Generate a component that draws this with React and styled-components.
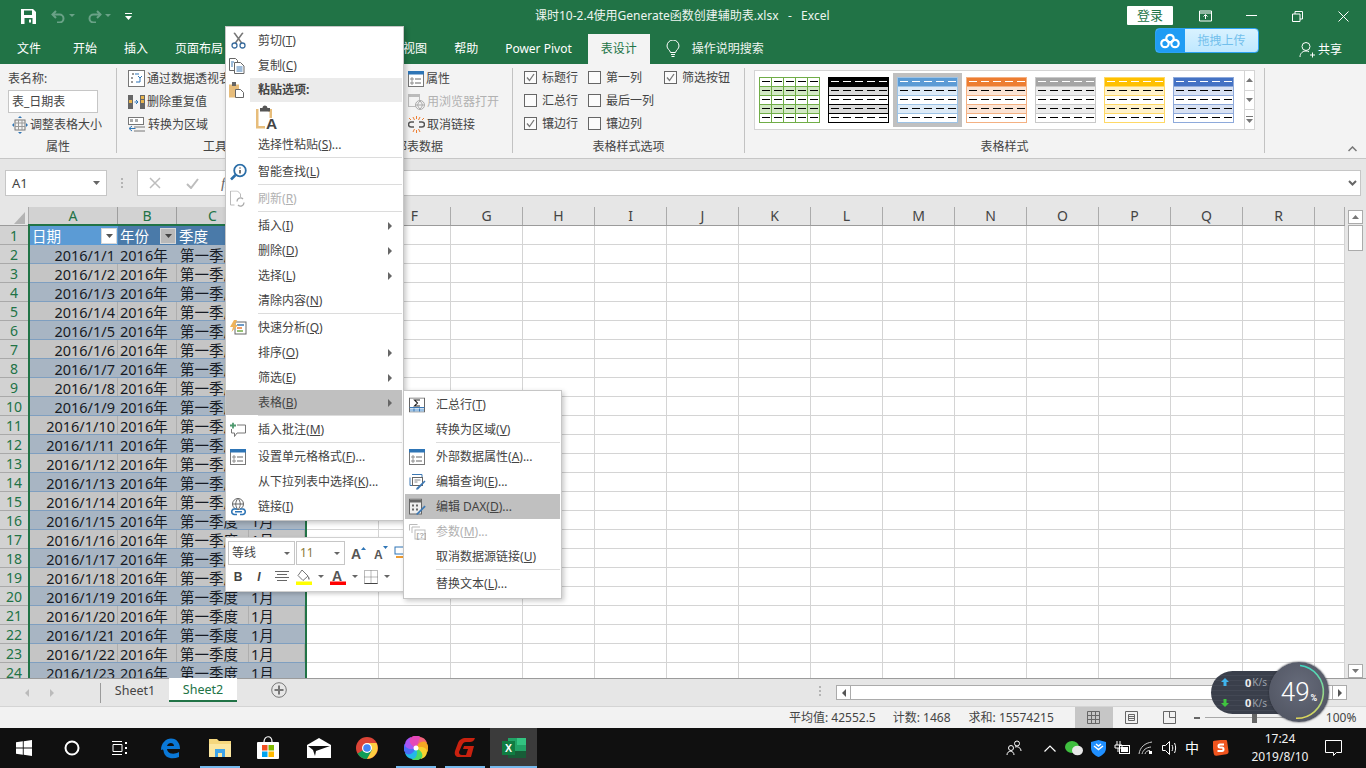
import React from 'react';
import styled, { createGlobalStyle } from 'styled-components';

const Global = createGlobalStyle`
  html, body { margin: 0; padding: 0; background: #e6e6e6; }
  * { box-sizing: border-box; }
  #root { width: 1366px; height: 768px; overflow: hidden; }
  u { text-underline-offset: 1px; }
`;
const GREEN = '#217346';
const FONT = `"Noto Sans", "Noto Sans CJK SC", sans-serif`;

const Page = styled.div`
  position: relative; width: 1366px; height: 768px; display: flex; flex-direction: column;
  overflow: hidden; font-family: ${FONT}; font-size: 12px; color: #444; line-height: 1;
`;

/* title bar */
const TitleBar = styled.div`height: 32px; background: ${GREEN}; display: flex; align-items: center; color: #fff;`;
const Qat = styled.div`width: 535px; display: flex; align-items: center; padding-left: 21px; flex: none;`;
const QatSlot = styled.span`display: inline-flex; align-items: center; margin-right: ${p => p.$mr || 0}px;`;
const DocTitle = styled.div`font-size: 12px; color: #eef5f0; white-space: pre;`;
const LoginBtn = styled.div`
  margin-left: auto; margin-right: 9px; width: 46px; height: 19px; margin-top: -1px; background: #fff; color: ${GREEN};
  display: flex; align-items: center; justify-content: center; font-size: 13px; border-radius: 1px;
`;
const WinBtn = styled.div`width: 46px; height: 32px; display: flex; align-items: center; justify-content: center;`;

/* tabs */
const TabBar = styled.div`height: 32px; background: ${GREEN}; display: flex; align-items: center; padding-left: 17px; gap: 27px; color: #fff;`;
const Tab = styled.div`white-space: nowrap; padding-top: 1px; margin-right: ${p => p.$mr || 0}px;`;
const ActiveTab = styled.div`
  margin-left: -11px; margin-right: -13px; width: 62px; height: 30px; margin-top: 2px; background: #f3f3f3; color: ${GREEN};
  display: flex; align-items: center; justify-content: center;
`;
const Tell = styled.div`display: flex; align-items: center; gap: 12px; margin-left: 2px; padding-top: 1px; color: #eef5f0;`;
const Share = styled.div`margin-left: auto; margin-right: 24px; display: flex; align-items: center; gap: 2px; padding-top: 3px;`;
const Upload = styled.div`
  position: absolute; left: 1155px; top: 28px; width: 104px; height: 25px; border-radius: 4px; overflow: hidden; display: flex;
  border: 1px solid #2ba1f2; background: linear-gradient(#d9f2ff, #bfe8ff); color: #72bfec; font-size: 12px;
`;
const UploadIcon = styled.div`width: 30px; background: #1f9cf4; display: flex; align-items: center; justify-content: center; margin: -1px 0 -1px -1px;`;
const UploadText = styled.div`flex: 1; display: flex; align-items: center; justify-content: center;`;

/* ribbon */
const Ribbon = styled.div`height: 95px; background: #f3f3f3; border-bottom: 1px solid #c6c6c6; display: flex;`;
const Group = styled.div`width: ${p => p.$w}px; flex: none; display: flex; flex-direction: column; padding-top: 3px;`;
const GroupBody = styled.div`flex: 1; padding-left: ${p => p.$pl || 0}px;`;
const CheckGrid = styled.div`flex: 1; padding-left: 11px; margin-top: -1px; display: grid; grid-template-columns: 64px 76px 80px; grid-auto-rows: 23px; align-content: start;`;
const GroupLabel = styled.div`height: 22px; display: flex; align-items: center; justify-content: center; white-space: nowrap;`;
const Divider = styled.div`width: 1px; flex: none; height: 85px; margin-top: 4px; background: #c2c2c2;`;
const RibbonRow = styled.div`height: 23px; display: flex; align-items: center; gap: 2px; white-space: nowrap; padding-left: ${p => p.$pl || 0}px; color: ${p => p.$off ? '#b1b1b1' : '#444'};`;
const NameLabel = styled.div`height: 23px; display: flex; align-items: center; padding-left: 8px;`;
const NameInput = styled.div`
  margin-left: 8px; width: 90px; height: 23px; background: #fff; border: 1px solid #c6c6c6; padding-left: 3px; display: flex; align-items: center;
`;
const Check = styled.span`
  width: 13px; height: 13px; border: 1px solid #666; background: #fbfbfb; display: inline-flex; flex: none; align-items: center; justify-content: center;
`;
const CheckItem = styled.div`height: 23px; display: flex; align-items: center; gap: 5px; white-space: nowrap;`;
const Gallery = styled.div`
  margin: 3px 0 0 9px; width: 501px; height: 60px; background: #fff; border: 1px solid #d4d4d4; display: flex;
`;
const ThumbWrap = styled.div`width: 69px; height: 54px; margin-top: 2px; padding: 4px; flex: none; background: ${p => p.$on ? '#c0c0c0' : 'transparent'};`;
const GalleryScroll = styled.div`margin: -1px -1px -1px 6px; width: 15px; border: 1px solid #d4d4d4; display: flex; flex-direction: column; background: #fff;`;
const GalleryBtn = styled.div`flex: 1; display: flex; align-items: center; justify-content: center; & + & { border-top: 1px solid #d4d4d4; }`;
const Collapse = styled.div`align-self: flex-end; margin: 0 9px 6px auto;`;

/* formula bar */
const FormulaBand = styled.div`height: 48px; background: #e6e6e6; display: flex; padding: 11px 5px; align-items: stretch;`;
const NameBox = styled.div`
  width: 102px; background: #fff; border: 1px solid #c6c6c6; display: flex; align-items: center; justify-content: space-between; padding: 0 6px;
  font-size: 13px; color: #444;
`;
const Dots = styled.div`width: 30px; display: flex; align-items: center; justify-content: center;`;
const FormulaInput = styled.div`flex: 1; background: #fff; border: 1px solid #c6c6c6; display: flex; align-items: center; padding: 0 3px 0 11px;`;
const FxBtn = styled.span`width: ${p => p.$w || 37}px; display: inline-flex; justify-content: flex-start;`;
const FxText = styled.span`font-family: "Liberation Serif", serif; font-style: italic; font-size: 15px; color: #666;`;
const FormulaExpand = styled.span`margin-left: auto;`;

/* grid */
const GridArea = styled.div`height: 471px; display: flex; background: #e6e6e6;`;
const Sheet = styled.div`width: 1345px; flex: none; display: flex; flex-direction: column; overflow: hidden;`;
const ColHeaders = styled.div`height: 19px; display: flex; flex: none; background: #e6e6e6; border-bottom: 1px solid #9b9b9b;`;
const Corner = styled.div`width: 29px; flex: none; display: flex; align-items: flex-end; justify-content: flex-end; padding: 0 3px 1px 0; border-right: 1px solid #ababab;`;
const ColHead = styled.div`
  width: ${p => p.$w}px; flex: none; display: flex; align-items: center; justify-content: center; font-size: 14px;
  border-right: 1px solid ${p => p.$sel ? '#9e9e9e' : '#ababab'};
  background: ${p => p.$sel ? '#d2d2d2' : 'transparent'}; color: ${p => p.$sel ? GREEN : '#444'};
`;
const GridBody = styled.div`flex: 1; display: flex; min-height: 0;`;
const RowHeads = styled.div`width: 28px; flex: none; display: flex; flex-direction: column;`;
const RowHead = styled.div`
  height: 19px; flex: none; background: #d2d2d2; color: ${GREEN}; font-size: 14px; display: flex; align-items: center; justify-content: center;
  border-bottom: 1px solid #a9a9a9; padding-top: 2px;
`;
const TableRegion = styled.div`
  width: 279px; flex: none; border-left: 2px solid ${GREEN}; border-right: 2px solid ${GREEN}; border-top: 2px solid ${GREEN}; margin-top: -2px;
  display: flex; flex-direction: column; background: #fff;
`;
const TableRow = styled.div`height: 19px; flex: none; display: flex; border-bottom: 1px solid #7f9fc0; background: ${p => p.$band ? '#a8b5c3' : '#c5c5c5'};`;
const HeadRow = styled.div`height: 19px; flex: none; display: flex; background: #4a7aa9;`;
const HeadCell = styled.div`
  width: ${p => p.$w}px; flex: none; display: flex; align-items: center; justify-content: space-between; padding: 1px 1px 0 2px; color: #fff; font-size: 14.5px;
  background: ${p => p.$on ? '#5b9bd5' : 'transparent'}; white-space: nowrap;
`;
const FilterBtn = styled.span`
  width: 16px; height: 16px; flex: none; display: flex; align-items: center; justify-content: center; background: ${p => p.$on ? '#fff' : '#b9b9b9'}; border: 1px solid #d8d8d8;
`;
const Cell = styled.div`
  width: ${p => p.$w}px; flex: none; display: flex; align-items: center; justify-content: ${p => p.$right ? 'flex-end' : 'flex-start'};
  padding: 2px 2px 0 ${p => p.$pl || 2}px; color: #171b24; font-size: 14.5px; white-space: nowrap;
  border-right: 1px solid ${p => p.$band ? 'transparent' : '#aeaeae'};
`;
const BlankRegion = styled.div`flex: 1; display: flex; flex-direction: column; background: #fff;`;
const BlankRow = styled.div`height: 19px; flex: none; display: flex;`;
const Blank = styled.div`width: ${p => p.$w}px; flex: none; border-right: 1px solid #d4d4d4; border-bottom: 1px solid #d4d4d4;`;
const VScroll = styled.div`flex: 1; display: flex; flex-direction: column; padding: 3px 3px 0 3px;`;
const ScrollBtn = styled.div`height: 14px; flex: none; background: #fff; border: 1px solid #ababab; display: flex; align-items: center; justify-content: center;`;
const VTrack = styled.div`flex: 1; display: flex; flex-direction: column; padding-top: 1px;`;
const VThumb = styled.div`height: 26px; background: #fff; border: 1px solid #ababab;`;

/* sheet bar */
const SheetBar = styled.div`height: 28px; background: #e6e6e6; border-top: 1px solid #9b9b9b; display: flex; align-items: flex-start;`;
const NavArrows = styled.div`width: 100px; height: 27px; display: flex; align-items: center; gap: 21px; padding-left: 25px;`;
const TabSep = styled.div`width: 1px; height: 20px; background: #9b9b9b; margin-top: 4px;`;
const SheetTab = styled.div`
  width: 68px; height: 24px; margin-top: -1px; padding-top: 2px; display: flex; align-items: center; justify-content: center;
  background: ${p => p.$on ? '#fff' : 'transparent'}; color: ${p => p.$on ? GREEN : '#444'};
  border-bottom: ${p => p.$on ? `2px solid ${GREEN}` : '0'}; font-size: 12.5px;
`;
const AddSheet = styled.div`margin: 3px 0 0 34px; display: flex;`;
const HScrollDots = styled.div`margin: 7px 0 0 525px; width: 16px; display: flex; justify-content: center;`;
const HScroll = styled.div`
  margin: 6px 0 0 8px; width: 511px; height: 15px; border: 1px solid #ababab; background: #fff; display: flex; justify-content: space-between;
`;
const HBtn = styled.div`width: 14px; display: flex; align-items: center; justify-content: center; border-${p => p.$side}: 1px solid #ababab;`;

/* status bar */
const StatusBar = styled.div`height: 22px; background: #f2f2f2; border-top: 1px solid #d4d4d4; display: flex; align-items: stretch; padding-left: 789px;`;
const Stat = styled.div`display: flex; align-items: center; white-space: nowrap; margin-right: ${p => p.$mr}px; font-size: 12px;`;
const ViewBtn = styled.div`width: 38px; display: flex; align-items: center; justify-content: center; background: ${p => p.$on ? '#c6c6c6' : 'transparent'};`;
const ZoomWrap = styled.div`width: 125px; display: flex; align-items: center; padding-left: 5px;`;
const ZoomMinus = styled.div`width: 6px; height: 2px; background: #666; flex: none;`;
const ZoomTrack = styled.div`flex: 1; height: 1px; margin-left: 5px; background: #a8a8a8; position: relative;`;
const ZoomThumb = styled.div`position: absolute; left: 47px; top: -6px; width: 5px; height: 12px; background: #666;`;
const ZoomPct = styled.div`display: flex; align-items: center; margin-left: 12px;`;

/* taskbar */
const Taskbar = styled.div`height: 40px; background: #101010; display: flex; align-items: stretch; color: #fff;`;
const TaskSlot = styled.div`
  width: ${p => p.$w || 48}px; flex: none; display: flex; align-items: center; justify-content: center;
  background: ${p => p.$active ? '#3b3b3b' : 'transparent'};
  border-bottom: 2px solid ${p => p.$open ? '#76b9ed' : 'transparent'}; border-top: 2px solid transparent;
  margin-left: ${p => p.$ml || 0}px;
`;
const Tray = styled.div`margin-left: auto; display: flex; align-items: stretch;`;
const TraySlot = styled.div`
  width: ${p => p.$w || 24}px; flex: none; display: flex; align-items: center; justify-content: center; font-size: 14px;
  margin-left: ${p => p.$ml || 0}px; margin-right: ${p => p.$mr || 0}px;
`;
const Clock = styled.div`width: 84px; flex: none; display: flex; flex-direction: column; align-items: center; justify-content: center; gap: 6px; font-size: 12px; color: #f2f2f2;`;

/* overlay: context menu */
const Menu = styled.div`
  position: absolute; left: ${p => p.$x}px; top: ${p => p.$y}px; width: ${p => p.$w}px; background: #fff; border: 1px solid #c6c6c6;
  padding: ${p => p.$pt}px 0 ${p => p.$pb}px 0; box-shadow: 2px 2px 5px rgba(0,0,0,.22); z-index: ${p => p.$z};
`;
const Item = styled.div`
  height: 25px; display: flex; align-items: center; position: relative; margin: 0 ${p => p.$mx}px 0 ${p => p.$ml ?? 0}px; white-space: nowrap;
  padding-left: ${p => p.$pad}px; color: ${p => p.$off ? '#b1b1b1' : '#444'};
  background: ${p => p.$hot ? '#c0c0c0' : 'transparent'};
`;
const ItemIcon = styled.span`position: absolute; left: ${p => p.$l}px; top: 50%; transform: translateY(-50%); display: flex;`;
const Arrow = styled.span`
  position: absolute; right: 10px; top: 50%; margin-top: -4px; border-left: 4px solid #666; border-top: 4px solid transparent; border-bottom: 4px solid transparent;
`;
const Sep = styled.div`height: 1px; margin: 0 1px 1px ${p => p.$ml}px; background: #dcdcdc;`;
const PasteHeader = styled.div`
  height: 24px; margin: 0 1px 0 24px; padding-left: 8px; background: #ebebeb; display: flex; align-items: center; font-weight: 700; color: #444; position: relative;
`;
const PasteRow = styled.div`height: 30px; padding-left: 30px; display: flex; align-items: center;`;
const Mini = styled.div`
  position: absolute; left: 225px; top: 537px; width: 190px; height: 55px; background: #fff; border: 1px solid #d0d0d0; box-shadow: 1px 2px 4px rgba(0,0,0,.2); z-index: 3;
  padding: 3px 2px; display: flex; flex-direction: column;
`;
const MiniRow = styled.div`height: 24px; display: flex; align-items: center;`;
const MiniSelect = styled.div`
  width: ${p => p.$w}px; height: 24px; border: 1px solid #c6c6c6; margin-right: 1px; display: flex; align-items: center; justify-content: space-between; padding: 0 4px 0 3px; font-size: 12px; color: ${p => p.$c || '#444'};
`;
const MiniBtn = styled.span`width: ${p => p.$w}px; flex: none; display: inline-flex; align-items: center; justify-content: center;`;
const BoldLetter = styled.span`font-family: "Liberation Sans", sans-serif; font-size: 12px; font-weight: 700; font-style: ${p => p.$i ? 'italic' : 'normal'}; color: #444;`;
const Caret = styled.span`width: 0; height: 0; border-left: 3px solid transparent; border-right: 3px solid transparent; border-top: 3px solid #666; flex: none;`;

/* overlay: net meter */
const Net = styled.div`
  position: absolute; left: 1211px; top: 671px; width: 100px; height: 43px; border-radius: 22px 0 0 22px; z-index: 4;
  background: repeating-linear-gradient(#3a3f4b 0 4px, #434854 4px 5px);
  display: flex; flex-direction: column; justify-content: space-around; padding: 1px 0 1px 10px; color: #eee; font-size: 11px; font-weight: 700;
`;
const NetRow = styled.div`display: flex; align-items: center;`;
const NetNum = styled.span`margin-left: 16px;`;
const NetUnit = styled.span`font-weight: 400; color: #9aa0aa; font-size: 10px; margin-left: 1px;`;
const Dial = styled.div`
  position: absolute; left: 1269px; top: 662px; width: 60px; height: 60px; border-radius: 50%; z-index: 5;
  background: radial-gradient(circle at 50% 40%, #666b7a, #4c505d); box-shadow: 0 0 2px #22252c;
  display: flex; align-items: baseline; justify-content: center; padding-top: 17px; color: #fff; font-family: Roboto, sans-serif; font-size: 26px; font-weight: 300;
`;
const DialPct = styled.span`font-size: 9px; font-weight: 700; margin-left: 1px;`;
const DialArc = styled.svg`position: absolute; left: 0; top: 0;`;

/* ---------- drawings ---------- */
const S = ({ w = 16, h = 16, vb, children }) => (
  <svg width={w} height={h} viewBox={vb || `0 0 ${w} ${h}`} fill="none" style={{ display: 'block', flex: 'none' }}>{children}</svg>
);
const Save = () => <S w={15} h={15}><path d="M0 0h12l3 3v12H0z" fill="#fff" /><rect x="3" y="1.500" width="8" height="4.500" fill={GREEN} /><rect x="3.500" y="9" width="8" height="6" fill={GREEN} /><rect x="8" y="10.500" width="2" height="3" fill="#fff" /></S>;
const Undo = ({ flip }) => <S w={15} h={13}><g transform={flip ? 'translate(15,0) scale(-1,1)' : ''} stroke="#6aa287" strokeWidth="2"><path d="M5 1 1.500 4.500 5 8" /><path d="M2 4.500h6.500a4 4 0 0 1 0 8H6" /></g></S>;
const Dn = ({ c = '#6aa287' }) => <S w={6} h={4}><path d="M0 0h6L3 3z" fill={c} /></S>;
const Custom = () => <S w={7} h={7}><path d="M0 0h7v1H0zM0 3h7L3.500 7z" fill="#fff" /></S>;
const RibbonDisp = () => <S w={13} h={12}><path d="M.5 1h12v10H.5zM.5 3h12" stroke="#fff" /><path d="M6.500 9V5M4.500 6.500l2-2 2 2" stroke="#fff" /></S>;
const Minus = () => <S w={11} h={2}><rect width="11" height="1" fill="#fff" /></S>;
const Restore = () => <S w={11} h={11}><path d="M.5 3h7.500v7.500H.5zM3 3V.5h7.500V8H8" stroke="#fff" /></S>;
const Close = () => <S w={11} h={11}><path d="m.5.5 10 10M10.500.5l-10 10" stroke="#fff" /></S>;
const Bulb = () => <S w={14} h={18}><path d="M4.500 12.500C4 10 1 9 1 6a6 6 0 0 1 12 0c0 3-3 4-3.500 6.500z" stroke="#fff" /><path d="M5 14.500h4M5.500 16.500h3" stroke="#fff" /></S>;
const Person = () => <S w={17} h={17}><circle cx="7" cy="5.500" r="4" stroke="#fff" /><path d="M1 16c0-4 3-6 6-6 1 0 2 .2 3 .8M11 14h5M13.500 11.500v5" stroke="#fff" /></S>;
const Cloud = () => <S w={20} h={16}><circle cx="10" cy="5.500" r="3.700" stroke="#fff" strokeWidth="2.200" /><circle cx="5" cy="10.500" r="3.700" stroke="#fff" strokeWidth="2.200" /><circle cx="15" cy="10.500" r="3.700" stroke="#fff" strokeWidth="2.200" /></S>;

const Pivot = () => <S w={17} h={17}><rect x=".5" y=".5" width="16" height="16" stroke="#777" fill="#fff" /><path d="M4 3h2v2H4zM3 7h2v2H3zM3 11h2v2H3z" fill="#999" /><path d="M8 12h4V8M10 6l2 2 2-2M7 4h4" stroke="#2e75b6" /></S>;
const Dedupe = () => <S w={17} h={16}><path d="M0 1h5v14H0zM12 1h5v14h-5z" fill="#666" /><path d="M1 6h3v3H1zM13 6h3v3h-3zM13 2h3v3h-3z" fill="#e9b44c" /><path d="M6.500 8h3M8 6l2 2-2 2" stroke="#2e75b6" /></S>;
const Convert = () => <S w={18} h={16}><rect x=".5" y=".5" width="15" height="7" stroke="#777" fill="#fff" /><path d="M2 2h3v3H2zM7 2h3v3H7z" fill="#aaa" /><path d="M6 10h11M6 14h11" stroke="#777" /><path d="M4 9 1 11.500 4 14" stroke="#2e75b6" /><path d="M1.500 11.500h6" stroke="#2e75b6" /></S>;
const Resize = () => <S w={16} h={18}><rect x="3" y="4" width="10" height="10" stroke="#777" /><path d="M3 7h10M3 10.500h10M6.500 4v10M10 4v10" stroke="#999" /><path d="m8 0-2 2h4zM8 18l-2-2h4zM0 9l2-2v4zM16 9l-2-2v4z" fill="#2e75b6" /></S>;
const Props = ({ off }) => <S w={16} h={16}><rect x=".5" y=".5" width="15" height="15" fill="#fff" stroke="#777" /><rect width="16" height="3.500" fill={off ? '#aaa' : '#2e75b6'} /><path d="M3 7h2v2H3zM3 11h2v2H3z" stroke="#777" strokeWidth=".8" /><path d="M7 8h6M7 12h6" stroke="#666" /></S>;
const Browser = () => <S w={17} h={16}><rect x=".5" y=".5" width="11" height="12" stroke="#bbb" /><rect width="12" height="3" fill="#bbb" /><circle cx="12" cy="11" r="4.500" fill="#f3f3f3" stroke="#aaa" /><path d="M8 11h8M12 7c-3 3-3 5 0 8M12 7c3 3 3 5 0 8" stroke="#aaa" /></S>;
const Unlink = () => <S w={17} h={17}><path d="M6 6H3a2.500 2.500 0 0 0 0 5h3M11 6h3a2.500 2.500 0 0 1 0 5h-3" stroke="#555" strokeWidth="1.500" /><path d="M5 1l1.500 3M12 1l-1.500 3M8.500 0v3M5 16l1.500-3M12 16l-1.500-3M8.500 17v-3M1 2l2 2M16 2l-2 2" stroke="#ed7d31" /></S>;
const Tick = () => <S w={11} h={11}><path d="m2 5.500 2.500 3L9 2" stroke="#777" strokeWidth="1.300" /></S>;

const THEMES = [
  ['#70ad47', '#fff', '#000', '#d3e8c5'],
  ['#000', '#000', '#fff', '#d9d9d9'],
  ['#9dc3e6', '#5b9bd5', '#fff', '#deebf7'],
  ['#f4b183', '#ed7d31', '#fff', '#fbe4d5'],
  ['#c9c9c9', '#a5a5a5', '#fff', '#ededed'],
  ['#ffd966', '#ffc000', '#fff', '#fff2cc'],
  ['#8eaadb', '#4472c4', '#fff', '#d9e2f3'],
];
const Thumb = ({ t, i }) => {
  const [line, head, headDash, band] = t;
  return (
    <S w={61} h={46}>
      {[0, 1, 2, 3, 4].map(r => (
        <g key={r}>
          <rect x=".5" y={.5 + r * 9} width="60" height="9" fill={r === 0 ? head : r % 2 ? band : '#fff'} stroke={line} />
          {[0, 1, 2, 3, 4].map(c => (
            <rect key={c} x={3 + c * 12} y={4 + r * 9} width="8" height="1" fill={r === 0 ? headDash : '#000'} />
          ))}
        </g>
      ))}
      {i === 0 && [12, 24, 36, 48].map(x => <path key={x} d={`M${x + .5} 0v46`} stroke={line} />)}
    </S>
  );
};

const Scissors = () => <S w={15} h={17}><path d="M3 0l8 11M12 0 4 11" stroke="#777" strokeWidth="1.500" /><circle cx="3.500" cy="13" r="2.500" stroke="#3c6e9f" strokeWidth="1.300" /><circle cx="11.500" cy="13" r="2.500" stroke="#3c6e9f" strokeWidth="1.300" /></S>;
const CopyI = () => <S w={16} h={16}><path d="M.5.500h6l2 2v10h-8z" stroke="#666" fill="#fff" /><path d="M5.500 4.500h6l3.500 3.500v7.500H5.500z" stroke="#666" fill="#fff" /><path d="M2 4h3M2 6h2M2 8h2M7.500 9h6M7.500 11h6M7.500 13h6" stroke="#3c78b4" /></S>;
const PasteI = () => <S w={15} h={16}><rect y="2.500" width="10" height="13" fill="#e7bd7b" /><rect x="3" y="0" width="4" height="4" fill="#666" /><path d="M6.500 7.500h5l3 3v5h-8z" fill="#fff" stroke="#666" /></S>;
const PasteA = () => <S w={22} h={24}><path d="M0 4h2.500v17H9v2.500H0zM12 4h4v9h-2.500V6.500H12z" fill="#e7bd7b" /><path d="M4 3h2.500a2.500 2.500 0 0 1 5 0H14v3.500H4z" fill="#555" /><text x="10" y="23.500" fontFamily="Liberation Sans, sans-serif" fontSize="15.500" fontWeight="700" fill="#444">A</text></S>;
const Lookup = () => <S w={17} h={17}><circle cx="10" cy="7" r="5.800" stroke="#2b6ea8" strokeWidth="1.800" /><path d="M5.500 11.500 1 16" stroke="#2b6ea8" strokeWidth="2.500" /><path d="M10 4v1M10 6.500V10" stroke="#444" strokeWidth="1.500" /></S>;
const RefreshI = () => <S w={16} h={17}><path d="M.5.500h7l3 3v3M.5.500v14h4" stroke="#bbb" /><path d="M7 11a3.500 3.500 0 0 1 6-2.500M14 12a3.500 3.500 0 0 1-6 2.500" stroke="#aaa" strokeWidth="1.300" /></S>;
const Bolt = () => <S w={17} h={16}><rect x="5" y="2" width="11" height="12" fill="#fff" stroke="#666" /><path d="M7 5h7" stroke="#3c78b4" strokeWidth="1.500" /><path d="M7 8h5" stroke="#ed7d31" strokeWidth="1.500" /><path d="M7 11h6" stroke="#70ad47" strokeWidth="1.500" /><path d="M4 0 0 7h3L1.500 12 8 5H5l2-5z" fill="#efb35a" /></S>;
const Comment = () => <S w={16} h={15}><path d="M7 2.500h8.500v8H7L4.500 14v-3.500H1.500V6.500" stroke="#777" /><path d="M0 3h6M3 0v6" stroke="#4f9a6f" strokeWidth="1.800" /></S>;
const LinkI = () => <S w={17} h={18}><circle cx="8" cy="6" r="5.500" stroke="#666" /><path d="M2.500 6h11M8 .5c-3 3-3 8 0 11M8 .5c3 3 3 8 0 11" stroke="#666" /><path d="M7 11H4a2.800 2.800 0 0 0 0 5.500h3M10 11h3a2.800 2.800 0 0 1 0 5.500h-3M5 13.700h7" stroke="#2e75b6" strokeWidth="1.500" /></S>;
const SumI = () => <S w={16} h={15}><rect x=".5" y=".5" width="15" height="14" fill="#fff" stroke="#666" /><rect x="1" y="11" width="14" height="3" fill="#9dc3e6" /><path d="M.5 10h15M5 11v3M10.500 11v3" stroke="#3c78b4" /><path d="M11 2.500H5.500l3 3-3 3H11" stroke="#222" strokeWidth="1.100" /></S>;
const QueryI = () => <S w={17} h={16}><path d="M3 .5h10v3M1 3.500v8h4" stroke="#3c78b4" /><rect x="3.500" y="3.500" width="10" height="8" fill="#fff" stroke="#666" /><path d="M5.500 6h6M5.500 8h3" stroke="#888" /><path d="m7.500 14 8-7.500 1 1-7.500 8H7z" fill="#3c78b4" /></S>;
const DaxI = () => <S w={17} h={17}><rect x=".5" y=".5" width="12" height="15" fill="#eee" stroke="#666" /><rect x="1" y="1" width="11" height="3" fill="#666" /><path d="M3 6h2v2H3zM7 6h2v2H7zM3 10h2v2H3zM7 10h2v2H7z" fill="#666" /><path d="m7.500 15 8-8 1.200 1.200-8 8H7.500z" fill="#3c78b4" /></S>;
const ParamI = () => <S w={17} h={16}><path d="M.5.500h8M.5.500v6M3 3h8M3 3v6" stroke="#bbb" /><rect x="6" y="6" width="10" height="9" stroke="#bbb" fill="#fff" /><text x="7.500" y="14" fontSize="8" fontWeight="700" fill="#aaa" fontFamily="Liberation Sans, sans-serif">[?]</text></S>;

const FontGrow = ({ up }) => <S w={15} h={14}><text x="0" y="13" fontFamily="Liberation Sans, sans-serif" fontSize={up ? 14 : 12} fontWeight="700" fill="#555">A</text><path d={up ? 'm10 4 2.500-3L15 4z' : 'm9 0 5 0-2.500 3z'} fill="#2e75b6" /></S>;
const Fill = () => <S w={16} h={16}><path d="m6 1 6 6-5 4.500L2 6.500z" stroke="#777" fill="#fff" /><path d="M12 7c2 2 2 3 1 4-1-1-1-2-1-4" fill="#777" /><rect y="12.500" width="16" height="3.500" fill="#ff0" /></S>;
const FontColor = () => <S w={16} h={16}><text x="2" y="12" fontFamily="Liberation Sans, sans-serif" fontSize="14" fontWeight="700" fill="#555">A</text><rect y="12.500" width="16" height="3.500" fill="#f00" /></S>;
const Borders = () => <S w={14} h={14}><path d="M.5.500h13v13H.5zM7 .5v13M.5 7h13" stroke="#777" strokeDasharray="1 1" /><path d="M.5 13.500h13" stroke="#444" /></S>;
const AlignI = () => <S w={14} h={11}><path d="M0 .5h14M2 3.500h10M0 6.500h14M2 9.500h10" stroke="#666" /></S>;
const WrapI = () => <S w={14} h={14}><rect x="1" y="1" width="12" height="7" stroke="#2e75b6" /><path d="M2 11h9" stroke="#ed9b31" strokeWidth="2" /></S>;

const WinLogo = () => <S w={16} h={16}><path d="M0 2.300 6.800 1.300v6.200H0zM7.700 1.200 16 0v7.500H7.700zM0 8.500h6.800v6.200L0 13.700zM7.700 8.500H16V16l-8.300-1.200z" fill="#fff" /></S>;
const Ring = () => <S w={16} h={16}><circle cx="8" cy="8" r="6.500" stroke="#fff" strokeWidth="2" /></S>;
const TaskView = () => <S w={16} h={14}><path d="M0 .5h10M0 13.500h10M1 3.500h9v7H1z" stroke="#fff" /><path d="M13 1h2v2h-2zM13 6h2v2h-2zM13 11h2v2h-2z" fill="#fff" /></S>;
const Edge = () => <S w={22} h={22}><path d="M2 13C2 6 7 1.500 12 1.500c6 0 9 5 9 10.500H8c.5 5 7 6 12 3v5c-7 3-15 1-15.500-6.500C4 12 3 12.500 2 13zM8 9h7c0-4-6-4-7 0z" fill="#0a78d7" fillRule="evenodd" /></S>;
const Folder = () => <S w={24} h={20}><path d="M1 1h8l2 2h12v16H1z" fill="#f5d77d" /><path d="M1 6h22v13H1z" fill="#fce7a0" /><rect x="7" y="11" width="10" height="8" fill="#3fa5e8" /><rect x="10" y="15" width="4" height="4" fill="#fce7a0" /></S>;
const Store = () => <S w={24} h={24}><path d="M8 6c0-7 8-7 8 0" stroke="#fff" strokeWidth="1.200" /><rect x="1" y="6" width="22" height="17" fill="#fff" rx="1" /><rect x="6" y="9" width="5.500" height="5.500" fill="#f25022" /><rect x="12.500" y="9" width="5.500" height="5.500" fill="#7fba00" /><rect x="6" y="15.500" width="5.500" height="5.500" fill="#00a4ef" /><rect x="12.500" y="15.500" width="5.500" height="5.500" fill="#ffb900" /></S>;
const Mail = () => <S w={24} h={20}><path d="M0 7 12 0l12 7v13H0z" fill="#fff" /><path d="M1 8h22L9 13l-1 5-2-6z" fill="#111" /></S>;
const Chrome = () => <S w={22} h={22}><circle cx="11" cy="11" r="11" fill="#db4437" /><path d="M11 11 1.500 16.500A11 11 0 0 0 11 22l5.500-9.500z" fill="#0f9d58" /><path d="M11 6h9.500A11 11 0 0 1 11 22l5-9z" fill="#ffcd40" /><circle cx="11" cy="11" r="5" fill="#fff" /><circle cx="11" cy="11" r="3.800" fill="#4285f4" /></S>;
const Pin = () => {
  const cols = ['#f2637b', '#f5a623', '#f8d12f', '#4cd964', '#22b8e8', '#4a6cf7', '#a855f7', '#e548b8'];
  return <S w={24} h={24}>{cols.map((c, i) => <path key={c} transform={`rotate(${i * 45} 12 12)`} d="M12 12C10 7 11 1 16 1c4 .5 6 3 7 6z" fill={c} />)}<circle cx="12" cy="12" r="2.500" fill="#fff" /></S>;
};
const RedG = () => <S w={22} h={22}><path d="M21 1c-1 3-3 4-5 4h-4c-2 0-3 1-4 3l-3 7c0 2 1 3 3 3h4l2-6h-5l1-3h10l-3 11H5c-3 0-5-2-4-6l3-8c1-3 4-5 8-5z" fill="#c9210f" /></S>;
const ExcelI = () => <S w={24} h={22}><rect x="6" y="1" width="18" height="20" fill="#21a366" /><rect x="15" y="1" width="9" height="7" fill="#33c481" /><rect x="6" y="14" width="18" height="7" fill="#185c37" /><rect y="4" width="13" height="14" fill="#107c41" /><text x="3" y="15" fontSize="10.500" fontWeight="700" fill="#fff" fontFamily="Liberation Sans, sans-serif">X</text></S>;
const People = () => <S w={16} h={16}><circle cx="5" cy="8" r="2.500" stroke="#fff" /><circle cx="11" cy="3.500" r="2.500" stroke="#fff" /><path d="M1 15c0-5 7-5 7 0M9 7c3-1 6 1 6 4" stroke="#fff" /></S>;
const ChevUp = () => <S w={12} h={7}><path d="m.5 6.500 5.500-5.500 5.500 5.500" stroke="#fff" strokeWidth="1.200" /></S>;
const WeChat = () => <S w={18} h={15}><ellipse cx="7" cy="6" rx="7" ry="6" fill="#3fbf3f" /><ellipse cx="12.500" cy="9.500" rx="5.500" ry="4.800" fill="#e8e8e8" /></S>;
const Shield = () => <S w={15} h={17}><path d="M7.500 0 15 2v6c0 5-4 7.500-7.500 9C4 15.500 0 13 0 8V2z" fill="#1f8fff" /><path d="M3 6l4.500 3.500L12 6M5 4l2.500 2L10 4" stroke="#fff" strokeWidth="1.500" /></S>;
const Battery = () => <S w={16} h={14}><path d="M3 0v4M6 0v4M1 4h7v3H1zM4 7v4" stroke="#fff" /><rect x="5.500" y="4.500" width="10" height="8" stroke="#fff" /><rect x="7" y="6" width="7" height="5" fill="#fff" /></S>;
const Wifi = () => <S w={16} h={14}><path d="M1 13C2 6 7 2 14 1M4 13c1-4 4-6.500 9-7M7 13c.5-2 2-3.500 5-3.500" stroke="#ccc" /><rect x="11" y="10" width="3" height="3" fill="#fff" /></S>;
const Volume = () => <S w={15} h={14}><path d="M.5 4.500h3l4-4v13l-4-4h-3z" stroke="#fff" /><path d="M10 4c1 2 1 4 0 6M12.500 2c1.500 3 1.500 7 0 10" stroke="#fff" /></S>;
const Sogou = () => <S w={16} h={16}><rect width="15" height="15" rx="2.500" fill="#f0541e" transform="rotate(-8 8 8)" /><path d="M11 4.500H7c-2 0-2 3 0 3h2c2 0 2 3.500 0 3.500H4.500" stroke="#fff" strokeWidth="2" /></S>;
const Notif = () => <S w={17} h={16}><path d="M.5.500h16v12h-5L8.500 15.500V12.500H.5z" stroke="#fff" /></S>;
const NetArrow = ({ up, c }) => <S w={8} h={8}><path d={up ? 'M4 0 8 4H5.500v4h-3V4H0z' : 'M4 8 8 4H5.500V0h-3v4H0z'} fill={c} /></S>;

const UpDown = ({ d, c = '#777' }) => <S w={7} h={4}><path d={d === 'u' ? 'M0 4h7L3.500 0z' : 'M0 0h7L3.500 4z'} fill={c} /></S>;

/* ---------- data ---------- */
const COLS = ['E', 'F', 'G', 'H', 'I', 'J', 'K', 'L', 'M', 'N', 'O', 'P', 'Q', 'R'];
const ROWS = Array.from({ length: 24 }, (_, i) => i + 1);
const DATA = ROWS.slice(1).map(i => `2016/1/${i - 1}`);
const Label = ({ t, k, tail }) => <span>{t}(<u>{k}</u>){tail}</span>;
const Row = ({ t, k, tail, ic, off, arrow, hot, l = 4 }) => (
  <Item $pad={32} $mx={1} $off={off} $hot={hot}>
    {ic && <ItemIcon $l={l}>{ic}</ItemIcon>}
    <Label t={t} k={k} tail={tail} />
    {arrow && <Arrow />}
  </Item>
);
const SubRow = ({ t, k, tail, ic, off, hot }) => (
  <Item $pad={31} $mx={1} $ml={1} $off={off} $hot={hot}>
    {ic && <ItemIcon $l={4}>{ic}</ItemIcon>}
    <Label t={t} k={k} tail={tail} />
  </Item>
);

export default function App() {
  return (
    <Page>
      <Global />
      <TitleBar>
        <Qat>
          <QatSlot $mr={15}><Save /></QatSlot>
          <QatSlot $mr={3}><Undo /></QatSlot>
          <QatSlot $mr={12}><Dn /></QatSlot>
          <QatSlot $mr={3}><Undo flip /></QatSlot>
          <QatSlot $mr={14}><Dn /></QatSlot>
          <QatSlot><Custom /></QatSlot>
        </Qat>
        <DocTitle>课时10-2.4使用Generate函数创建辅助表.xlsx   -   Excel</DocTitle>
        <LoginBtn>登录</LoginBtn>
        <WinBtn><RibbonDisp /></WinBtn>
        <WinBtn><Minus /></WinBtn>
        <WinBtn><Restore /></WinBtn>
        <WinBtn><Close /></WinBtn>
      </TitleBar>
      <TabBar>
        <Tab $mr={5}>文件</Tab>
        {['开始', '插入', '页面布局', '公式', '数据', '审阅', '视图', '帮助'].map(t => <Tab key={t}>{t}</Tab>)}
        <Tab>Power Pivot</Tab>
        <ActiveTab>表设计</ActiveTab>
        <Tell><Bulb />操作说明搜索</Tell>
        <Share><Person />共享</Share>
      </TabBar>
      <Upload><UploadIcon><Cloud /></UploadIcon><UploadText>拖拽上传</UploadText></Upload>

      <Ribbon>
        <Group $w={116}>
          <GroupBody>
            <NameLabel>表名称:</NameLabel>
            <NameInput>表_日期表</NameInput>
            <RibbonRow $pl={12}><Resize />调整表格大小</RibbonRow>
          </GroupBody>
          <GroupLabel>属性</GroupLabel>
        </Group>
        <Divider />
        <Group $w={196}>
          <GroupBody $pl={11}>
            <RibbonRow><Pivot />通过数据透视表汇总</RibbonRow>
            <RibbonRow><Dedupe />删除重复值</RibbonRow>
            <RibbonRow><Convert />转换为区域</RibbonRow>
          </GroupBody>
          <GroupLabel>工具</GroupLabel>
        </Group>
        <Divider />
        <Group $w={198}>
          <GroupBody $pl={94}>
            <RibbonRow><Props />属性</RibbonRow>
            <RibbonRow $off><Browser />用浏览器打开</RibbonRow>
            <RibbonRow><Unlink />取消链接</RibbonRow>
          </GroupBody>
          <GroupLabel>外部表数据</GroupLabel>
        </Group>
        <Divider />
        <Group $w={231}>
          <CheckGrid>
            <CheckItem><Check><Tick /></Check>标题行</CheckItem>
            <CheckItem><Check />第一列</CheckItem>
            <CheckItem><Check><Tick /></Check>筛选按钮</CheckItem>
            <CheckItem><Check />汇总行</CheckItem>
            <CheckItem><Check />最后一列</CheckItem>
            <span />
            <CheckItem><Check><Tick /></Check>镶边行</CheckItem>
            <CheckItem><Check />镶边列</CheckItem>
          </CheckGrid>
          <GroupLabel>表格样式选项</GroupLabel>
        </Group>
        <Divider />
        <Group $w={519}>
          <GroupBody>
            <Gallery>
              {THEMES.map((t, i) => <ThumbWrap key={t[1] + i} $on={i === 2}><Thumb t={t} i={i} /></ThumbWrap>)}
              <GalleryScroll>
                <GalleryBtn><UpDown d="u" /></GalleryBtn>
                <GalleryBtn><UpDown d="d" /></GalleryBtn>
                <GalleryBtn><S w={7} h={7}><path d="M0 0h7v1H0zM0 3h7L3.500 7z" fill="#777" /></S></GalleryBtn>
              </GalleryScroll>
            </Gallery>
          </GroupBody>
          <GroupLabel>表格样式</GroupLabel>
        </Group>
        <Divider />
        <Collapse><S w={9} h={6}><path d="m.5 5 4-4 4 4" stroke="#777" strokeWidth="1.500" /></S></Collapse>
      </Ribbon>

      <FormulaBand>
        <NameBox>A1<UpDown d="d" c="#666" /></NameBox>
        <Dots><S w={2} h={10}><path d="M0 0h2v2H0zM0 4h2v2H0zM0 8h2v2H0z" fill="#b4b4b4" /></S></Dots>
        <FormulaInput>
          <FxBtn><S w={12} h={12}><path d="m1 1 10 10M11 1 1 11" stroke="#bdbdbd" strokeWidth="1.500" /></S></FxBtn>
          <FxBtn $w={35}><S w={13} h={11}><path d="m1 6 4 4 7-9" stroke="#bdbdbd" strokeWidth="2" /></S></FxBtn>
          <FxBtn $w={20}><FxText>fx</FxText></FxBtn>
          <FormulaExpand><S w={9} h={7}><path d="m1 1 3.500 3.500L8 1" stroke="#666" strokeWidth="2" /></S></FormulaExpand>
        </FormulaInput>
      </FormulaBand>

      <GridArea>
        <Sheet>
          <ColHeaders>
            <Corner><S w={11} h={12}><path d="M11 0v12H0z" fill="#b4b4b4" /></S></Corner>
            <ColHead $w={89} $sel>A</ColHead>
            <ColHead $w={59} $sel>B</ColHead>
            <ColHead $w={72} $sel>C</ColHead>
            <ColHead $w={58} $sel>D</ColHead>
            {COLS.map(c => <ColHead key={c} $w={72}>{c}</ColHead>)}
            <ColHead $w={30} />
          </ColHeaders>
          <GridBody>
            <RowHeads>{ROWS.map(r => <RowHead key={r}>{r}</RowHead>)}</RowHeads>
            <TableRegion>
              <HeadRow>
                <HeadCell $w={88} $on>日期<FilterBtn $on><UpDown d="d" c="#555" /></FilterBtn></HeadCell>
                <HeadCell $w={59}>年份<FilterBtn><UpDown d="d" c="#444" /></FilterBtn></HeadCell>
                <HeadCell $w={72}>季度</HeadCell>
                <HeadCell $w={56}>月份</HeadCell>
              </HeadRow>
              {DATA.map((d, i) => {
                const band = i % 2 === 0;
                return (
                  <TableRow key={d} $band={band}>
                    <Cell $w={88} $right $band={band}>{d}</Cell>
                    <Cell $w={59} $band={band}>2016年</Cell>
                    <Cell $w={72} $pl={3} $band={band}>第一季度</Cell>
                    <Cell $w={56} $band={band}>1月</Cell>
                  </TableRow>
                );
              })}
            </TableRegion>
            <BlankRegion>
              {ROWS.map(r => (
                <BlankRow key={r}>
                  {COLS.map(c => <Blank key={c} $w={72} />)}
                  <Blank $w={30} />
                </BlankRow>
              ))}
            </BlankRegion>
          </GridBody>
        </Sheet>
        <VScroll>
          <ScrollBtn><UpDown d="u" /></ScrollBtn>
          <VTrack><VThumb /></VTrack>
          <ScrollBtn><UpDown d="d" /></ScrollBtn>
        </VScroll>
      </GridArea>

      <SheetBar>
        <NavArrows><S w={4} h={8}><path d="M4 0v8L0 4z" fill="#bbb" /></S><S w={4} h={8}><path d="M0 0v8l4-4z" fill="#bbb" /></S></NavArrows>
        <TabSep />
        <SheetTab>Sheet1</SheetTab>
        <SheetTab $on>Sheet2</SheetTab>
        <AddSheet><S w={16} h={16}><circle cx="8" cy="8" r="7.300" stroke="#777" /><path d="M8 3.500v9M3.500 8h9" stroke="#777" strokeWidth="2" /></S></AddSheet>
        <HScrollDots><S w={2} h={10}><path d="M0 0h2v2H0zM0 4h2v2H0zM0 8h2v2H0z" fill="#b4b4b4" /></S></HScrollDots>
        <HScroll>
          <HBtn $side="right"><S w={4} h={8}><path d="M4 0v8L0 4z" fill="#555" /></S></HBtn>
          <HBtn $side="left"><S w={4} h={8}><path d="M0 0v8l4-4z" fill="#555" /></S></HBtn>
        </HScroll>
      </SheetBar>

      <StatusBar>
        <Stat $mr={17}>平均值: 42552.5</Stat>
        <Stat $mr={18}>计数: 1468</Stat>
        <Stat $mr={21}>求和: 15574215</Stat>
        <ViewBtn $on><S w={13} h={13}><path d="M.5.500h12v12H.5zM4.500.5v12M8.500.5v12M.5 4.500h12M.5 8.500h12" stroke="#666" /></S></ViewBtn>
        <ViewBtn><S w={13} h={13}><path d="M.5.500h12v12H.5zM3.500 3.500h6v6h-6zM3.500 5.500h6M3.500 7.500h6" stroke="#666" /></S></ViewBtn>
        <ViewBtn><S w={13} h={13}><path d="M.5.500h12v12H.5zM6.500.5v6h6" stroke="#666" /></S></ViewBtn>
        <ZoomWrap><ZoomMinus /><ZoomTrack><ZoomThumb /></ZoomTrack></ZoomWrap>
        <ZoomPct>100%</ZoomPct>
      </StatusBar>

      <Taskbar>
        <TaskSlot><WinLogo /></TaskSlot>
        <TaskSlot><Ring /></TaskSlot>
        <TaskSlot><TaskView /></TaskSlot>
        <TaskSlot $w={52}><Edge /></TaskSlot>
        <TaskSlot $w={40} $ml={4} $open><Folder /></TaskSlot>
        <TaskSlot $w={48} $ml={4}><Store /></TaskSlot>
        <TaskSlot $w={54}><Mail /></TaskSlot>
        <TaskSlot $w={42}><Chrome /></TaskSlot>
        <TaskSlot $w={40} $ml={8} $open><Pin /></TaskSlot>
        <TaskSlot $w={40} $ml={9} $open><RedG /></TaskSlot>
        <TaskSlot $w={47} $ml={5} $open $active><ExcelI /></TaskSlot>
        <Tray>
          <TraySlot $w={24}><People /></TraySlot>
          <TraySlot $w={24} $ml={12}><ChevUp /></TraySlot>
          <TraySlot><WeChat /></TraySlot>
          <TraySlot><Shield /></TraySlot>
          <TraySlot><Battery /></TraySlot>
          <TraySlot><Wifi /></TraySlot>
          <TraySlot $w={22}><Volume /></TraySlot>
          <TraySlot $w={24}>中</TraySlot>
          <TraySlot $w={34}><Sogou /></TraySlot>
          <Clock><span>17:24</span><span>2019/8/10</span></Clock>
          <TraySlot $w={22} $mr={22}><Notif /></TraySlot>
        </Tray>
      </Taskbar>

      <Menu $x={225} $y={26} $w={179} $pt={1} $pb={1} $z={2}>
        <Row t="剪切" k="T" ic={<Scissors />} l={5} />
        <Row t="复制" k="C" ic={<CopyI />} l={3} />
        <PasteHeader>
          <ItemIcon $l={-21}><PasteI /></ItemIcon>
          粘贴选项:
        </PasteHeader>
        <PasteRow><PasteA /></PasteRow>
        <Row t="选择性粘贴" k="S" tail="..." />
        <Sep $ml={32} />
        <Row t="智能查找" k="L" ic={<Lookup />} />
        <Sep $ml={32} />
        <Row t="刷新" k="R" off ic={<RefreshI />} />
        <Sep $ml={32} />
        <Row t="插入" k="I" arrow />
        <Row t="删除" k="D" arrow />
        <Row t="选择" k="L" arrow />
        <Row t="清除内容" k="N" />
        <Sep $ml={32} />
        <Row t="快速分析" k="Q" ic={<Bolt />} />
        <Row t="排序" k="O" arrow />
        <Row t="筛选" k="E" arrow />
        <Row t="表格" k="B" arrow hot />
        <Sep $ml={32} />
        <Row t="插入批注" k="M" ic={<Comment />} />
        <Sep $ml={32} />
        <Row t="设置单元格格式" k="F" tail="..." ic={<Props />} />
        <Row t="从下拉列表中选择" k="K" tail="..." />
        <Row t="链接" k="I" ic={<LinkI />} />
      </Menu>

      <Menu $x={403} $y={390} $w={159} $pt={1} $pb={2} $z={4}>
        <SubRow t="汇总行" k="T" ic={<SumI />} />
        <SubRow t="转换为区域" k="V" />
        <Sep $ml={32} />
        <SubRow t="外部数据属性" k="A" tail="..." ic={<Props />} />
        <SubRow t="编辑查询" k="E" tail="..." ic={<QueryI />} />
        <SubRow t="编辑 DAX" k="D" tail="..." hot ic={<DaxI />} />
        <SubRow t="参数" k="M" tail="..." off ic={<ParamI />} />
        <SubRow t="取消数据源链接" k="U" />
        <Sep $ml={32} />
        <SubRow t="替换文本" k="L" tail="..." />
      </Menu>

      <Mini>
        <MiniRow>
          <MiniSelect $w={67}>等线<Caret /></MiniSelect>
          <MiniSelect $w={49} $c="#8a7a3a">11<Caret /></MiniSelect>
          <MiniBtn $w={24}><FontGrow up /></MiniBtn>
          <MiniBtn $w={22}><FontGrow /></MiniBtn>
          <MiniBtn $w={18}><WrapI /></MiniBtn>
        </MiniRow>
        <MiniRow>
          <MiniBtn $w={20}><BoldLetter>B</BoldLetter></MiniBtn>
          <MiniBtn $w={22}><BoldLetter $i>I</BoldLetter></MiniBtn>
          <MiniBtn $w={24}><AlignI /></MiniBtn>
          <MiniBtn $w={20}><Fill /></MiniBtn>
          <MiniBtn $w={14}><Caret /></MiniBtn>
          <MiniBtn $w={20}><FontColor /></MiniBtn>
          <MiniBtn $w={14}><Caret /></MiniBtn>
          <MiniBtn $w={18}><Borders /></MiniBtn>
          <MiniBtn $w={14}><Caret /></MiniBtn>
        </MiniRow>
      </Mini>

      <Net>
        <NetRow><NetArrow up c="#3fb4ec" /><NetNum>0</NetNum><NetUnit>K/s</NetUnit></NetRow>
        <NetRow><NetArrow c="#3fc43f" /><NetNum>0</NetNum><NetUnit>K/s</NetUnit></NetRow>
      </Net>
      <Dial>
        <DialArc width="60" height="60" viewBox="0 0 60 60" fill="none">
          <defs><linearGradient id="arc" x1="0" y1="0" x2="0" y2="1"><stop offset="0" stopColor="#3fd8c2" /><stop offset="1" stopColor="#dfd65a" /></linearGradient></defs>
          <path d="M31 3.500A26.500 26.500 0 0 1 27 56.300" stroke="url(#arc)" strokeWidth="1.600" />
        </DialArc>
        49<DialPct>%</DialPct>
      </Dial>
    </Page>
  );
}
